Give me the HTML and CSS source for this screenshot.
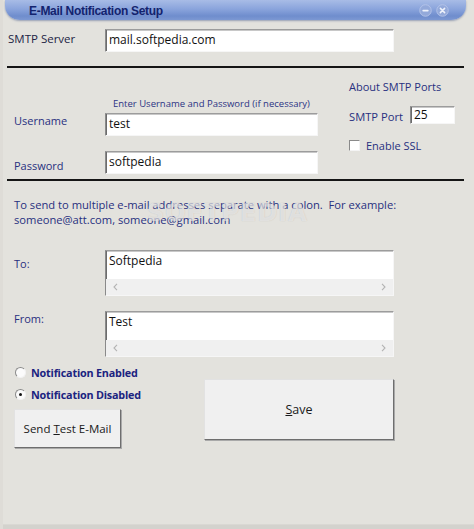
FILE: index.html
```html
<!DOCTYPE html>
<html>
<head>
<meta charset="utf-8">
<link rel="stylesheet" href="styles.css">
</head>
<body>
<div class="window">
  <div class="titlebar">
    <span class="title">E-Mail Notification Setup</span>
    <div class="tb-buttons">
      <svg class="tb-btn" width="13" height="13" viewBox="0 0 14 14"><circle cx="7" cy="7" r="6.2" fill="#93a9da" stroke="#b9c8ea" stroke-width="0.9"/><rect x="3.6" y="6.1" width="6.8" height="1.9" rx="0.9" fill="#eef2fb"/></svg>
      <svg class="tb-btn" width="13" height="13" viewBox="0 0 14 14"><circle cx="7" cy="7" r="6.2" fill="#93a9da" stroke="#b9c8ea" stroke-width="0.9"/><path d="M4.7 4.7 L9.3 9.3 M9.3 4.7 L4.7 9.3" stroke="#eef2fb" stroke-width="1.6" stroke-linecap="round"/></svg>
    </div>
  </div>

  <div class="row server-row">
    <span class="label dark">SMTP Server</span>
    <div class="field server-field">mail.softpedia.com</div>
  </div>

  <div class="sep"></div>

  <div class="creds">
    <div class="creds-left">
      <div class="hint">Enter Username and Password (if necessary)</div>
      <div class="row user-row">
        <span class="label lbl-user">Username</span>
        <div class="field cred-field">test</div>
      </div>
      <div class="row pass-row">
        <span class="label lbl-pass">Password</span>
        <div class="field cred-field">softpedia</div>
      </div>
    </div>
    <div class="creds-right">
      <div class="about">About SMTP Ports</div>
      <div class="port-row">
        <span class="label">SMTP Port</span>
        <div class="field port-field">25</div>
      </div>
      <div class="ssl-row">
        <span class="checkbox"></span>
        <span class="label">Enable SSL</span>
      </div>
    </div>
  </div>

  <div class="sep sep2"></div>

  <p class="note">To send to multiple e-mail addresses separate with a colon.&nbsp; For example:<br>someone@att.com, someone@gmail.com</p>
  <span class="watermark">SOFTPEDIA</span>

  <div class="row area-row to-row">
    <span class="label lbl-area">To:</span>
    <div class="field area">
      <div class="area-text">Softpedia</div>
      <div class="hscroll">
        <svg width="5" height="8" viewBox="0 0 5 8"><path d="M4 0.8 L1 4 L4 7.2" fill="none" stroke="#b3b3b3" stroke-width="1.1"/></svg>
        <svg width="5" height="8" viewBox="0 0 5 8"><path d="M1 0.8 L4 4 L1 7.2" fill="none" stroke="#b3b3b3" stroke-width="1.1"/></svg>
      </div>
    </div>
  </div>

  <div class="row area-row from-row">
    <span class="label lbl-area">From:</span>
    <div class="field area">
      <div class="area-text">Test</div>
      <div class="hscroll">
        <svg width="5" height="8" viewBox="0 0 5 8"><path d="M4 0.8 L1 4 L4 7.2" fill="none" stroke="#b3b3b3" stroke-width="1.1"/></svg>
        <svg width="5" height="8" viewBox="0 0 5 8"><path d="M1 0.8 L4 4 L1 7.2" fill="none" stroke="#b3b3b3" stroke-width="1.1"/></svg>
      </div>
    </div>
  </div>

  <div class="bottom">
    <div class="bottom-left">
      <div class="radio-row first"><span class="radio"></span><span class="radio-label">Notification Enabled</span></div>
      <div class="radio-row"><span class="radio checked"></span><span class="radio-label">Notification Disabled</span></div>
      <div class="button send-btn"><span>Send <u>T</u>est E-Mail</span></div>
    </div>
    <div class="button save-btn"><span><u>S</u>ave</span></div>
  </div>

  <div class="spacer"></div>
  <div class="frame-bottom"></div>
</div>
</body>
</html>
```

FILE: styles.css
```css
html, body {
  margin: 0;
  padding: 0;
  background: #e3e2dd;
}

.window {
  position: relative;
  width: 474px;
  height: 529px;
  display: flex;
  flex-direction: column;
  background: #e3e2dd;
  font-family: "Open Sans", "Noto Sans", sans-serif;
  font-size: 11px;
  color: #28307f;
  overflow: hidden;
  border-left: 3px solid #dedcd7;
  box-sizing: border-box;
}

.titlebar {
  height: 20px;
  margin: 0 8px 0 2px;
  padding-left: 24px;
  border-radius: 0 0 15px 15px / 0 0 14px 14px;
  background: linear-gradient(#a8bce6 0%, #8aa4dc 45%, #6f8dcd 80%, #7c98d3 100%);
  box-shadow: 0 1px 2px rgba(60, 80, 130, 0.45);
  display: flex;
  align-items: center;
  flex: 0 0 auto;
}

.title {
  flex: 1 1 auto;
  margin-top: 1px;
  font-family: "Liberation Sans", Arial, sans-serif;
  font-weight: bold;
  font-size: 12px;
  letter-spacing: -0.3px;
  color: #13236e;
}

.tb-buttons {
  display: flex;
  gap: 4px;
  margin-right: 17px;
  margin-top: 1px;
}

.tb-btn {
  display: block;
}

.row {
  display: flex;
  align-items: flex-start;
}

.label {
  font-size: 11px;
  color: #28307f;
  white-space: nowrap;
}

.label.dark {
  color: #1d2445;
  font-size: 11.5px;
}

.field {
  background: #fff;
  border: 1px solid;
  border-color: #9c9c9c #f6f6f6 #f6f6f6 #8a8a8a;
  box-shadow: inset 1px 0 0 #6c6c6c, inset 0 1px 0 #c8c8c8;
  box-sizing: border-box;
  color: #111;
  font-size: 11.5px;
  padding: 2px 0 0 3px;
  line-height: 16px;
}

.server-row {
  margin-top: 9px;
}

.server-row .label {
  width: 97px;
  padding-left: 5px;
  padding-top: 2px;
}

.server-field {
  width: 289px;
  height: 23px;
  font-size: 12px;
}

.sep {
  height: 2px;
  background: #151515;
  margin: 14px 10px 0 4px;
  flex: 0 0 auto;
}

.creds {
  display: flex;
  height: 111px;
}

.creds-left {
  width: 346px;
}

.hint {
  margin-top: 30px;
  padding-left: 110px;
  font-size: 9.5px;
  line-height: 12px;
  height: 12px;
  color: #2c3484;
}

.user-row {
  margin-top: 3px;
}

.pass-row {
  margin-top: 15px;
}

.lbl-user, .lbl-pass {
  width: 91px;
  padding-left: 11px;
  font-size: 11px;
}

.lbl-user {
  padding-top: 0px;
}

.lbl-pass {
  padding-top: 7px;
}

.cred-field {
  width: 213px;
  height: 23px;
  font-size: 12px;
}

.creds-right {
  display: flex;
  flex-direction: column;
}

.about {
  margin-top: 12px;
  font-size: 11px;
  line-height: 14px;
}

.port-row {
  display: flex;
  align-items: flex-start;
  margin-top: 12px;
}

.port-row .label {
  width: 61px;
  padding-top: 3px;
  font-size: 11.2px;
}

.port-field {
  width: 45px;
  height: 18px;
  padding-top: 0;
  font-size: 12px;
}

.ssl-row {
  display: flex;
  align-items: center;
  margin-top: 14px;
}

.checkbox {
  width: 11px;
  height: 11px;
  background: #fff;
  border: 1px solid;
  border-color: #8a8a8a #f4f4f4 #f4f4f4 #8a8a8a;
  box-sizing: border-box;
  margin-right: 6px;
}

.sep2 {
  margin-top: 0;
}

.note {
  margin: 16px 0 0 11px;
  font-size: 11.2px;
  line-height: 15px;
  color: #28307f;
}

.watermark {
  position: absolute;
  left: 144px;
  top: 199px;
  font-family: "DejaVu Sans", sans-serif;
  font-weight: bold;
  font-size: 24px;
  letter-spacing: 1px;
  color: rgba(255, 255, 255, 0.55);
  text-shadow: 0 0 1px rgba(130, 130, 130, 0.4);
  pointer-events: none;
}

.area-row .lbl-area {
  width: 91px;
  padding-left: 11px;
}

.to-row {
  margin-top: 23px;
}

.to-row .lbl-area {
  padding-top: 6px;
}

.from-row {
  margin-top: 15px;
}

.from-row .lbl-area {
  padding-top: 0px;
}

.area {
  width: 289px;
  height: 46px;
  padding: 0;
  display: flex;
  flex-direction: column;
  justify-content: space-between;
  font-size: 12px;
}

.area-text {
  padding: 2px 0 0 3px;
  line-height: 16px;
}

.hscroll {
  height: 16px;
  background: #f0f0f0;
  display: flex;
  justify-content: space-between;
  align-items: center;
  padding: 0 7px 0 7px;
}

.hscroll svg {
  display: block;
}

.bottom {
  display: flex;
  align-items: flex-start;
}

.bottom-left {
  width: 201px;
  display: flex;
  flex-direction: column;
}

.radio-row {
  display: flex;
  align-items: center;
  height: 16px;
  margin-top: 6px;
  padding-left: 12px;
}

.radio-row.first {
  margin-top: 7px;
}

.radio {
  position: relative;
  width: 11px;
  height: 11px;
  border-radius: 50%;
  background: #fbfbfb;
  border: 1px solid;
  border-color: #8a8a8a #f2f2f2 #f2f2f2 #8a8a8a;
  box-sizing: border-box;
  margin-right: 5px;
}

.radio.checked::after {
  content: "";
  position: absolute;
  left: 3px;
  top: 3px;
  width: 3px;
  height: 3px;
  border-radius: 50%;
  background: #111;
}

.radio-label {
  font-weight: bold;
  font-size: 10.8px;
  letter-spacing: -0.2px;
  color: #1b2380;
}

.button {
  background: #f0f0f0;
  border: 1px solid;
  border-color: #e2e2e2 #6e6e6e #6e6e6e #e2e2e2;
  box-shadow: 1px 1px 0 #a9a9a9;
  box-sizing: border-box;
  display: flex;
  align-items: center;
  justify-content: center;
  color: #1a1a1a;
  font-size: 11.5px;
  white-space: nowrap;
}

.button u {
  text-underline-offset: 1px;
}

.send-btn {
  width: 107px;
  height: 39px;
  margin: 7px 0 0 11px;
}

.save-btn {
  width: 190px;
  height: 61px;
  margin-top: 22px;
  font-size: 12.5px;
}

.spacer {
  flex: 1 1 auto;
}

.frame-bottom {
  height: 4px;
  background: #d3d2cd;
  border-top: 1px solid #d9d8d3;
  flex: 0 0 auto;
}
```
